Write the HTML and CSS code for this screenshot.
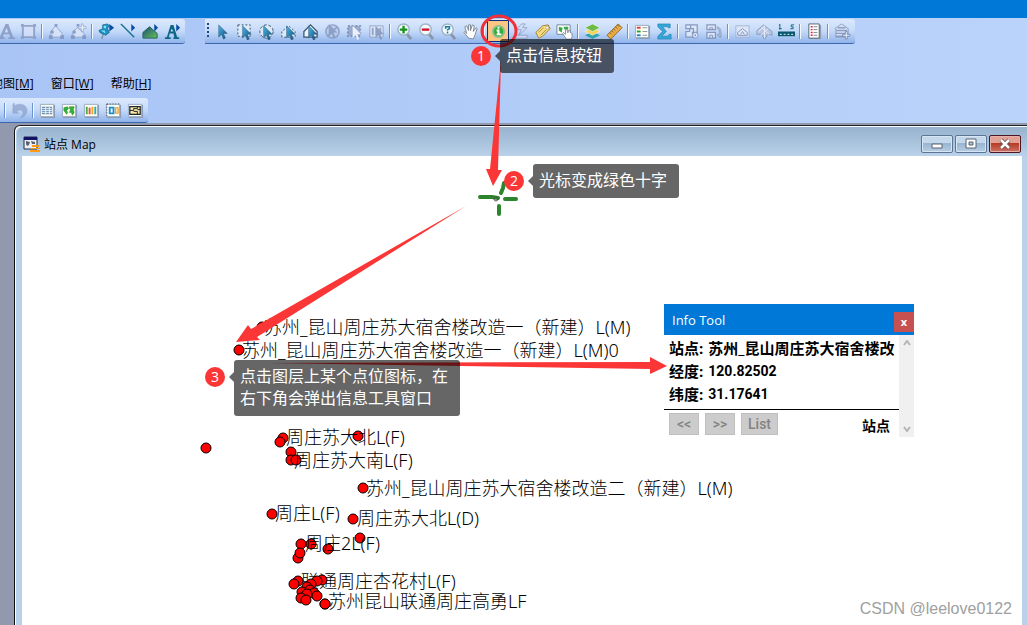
FILE: index.html
```
<!DOCTYPE html>
<html lang="zh-CN">
<head>
  <meta charset="UTF-8">
  <meta name="viewport" content="width=device-width, initial-scale=1.0">
  <title>站点 Map</title>
  <link rel="stylesheet" href="styles.css">
</head>
<body>
  <!-- 图标定义 -->
  <svg class="icon-defs" aria-hidden="true">
    <defs>
      <linearGradient id="blue" x1="0" y1="0" x2="1" y2="1"><stop offset="0" stop-color="#4db8e8"/><stop offset="1" stop-color="#0c4a78"/></linearGradient>
      <linearGradient id="green" x1="0" y1="0" x2="1" y2="1"><stop offset="0" stop-color="#1c4a78"/><stop offset="1" stop-color="#62c455"/></linearGradient>
      <path id="cursor" d="M5 2v13l3-3 2 5 2-1-2-5h4z"/>
      <g id="nodes" fill="#7c8fbc"><path d="M1 13h4v4H1zM13 13h4v4h-4zM3 8h3v3H3zM7 1h3v3H7z"/></g>
      <g id="lens"><path d="m11 11 5 6" stroke="#8a96a8" stroke-width="3"/><circle cx="8" cy="7" r="6" fill="#f3fbff" stroke="#9db2c4" stroke-width="1.5"/></g>
      <g id="card"><path d="M2 3h15v14H2z" fill="#8a9bb8"/><path d="M1.500 2.500h14v13h-14z" fill="#fffef2" stroke="#9aabc2"/></g>
    </defs>
    <symbol id="i-text" viewBox="0 0 18 18"><path d="M8 1h3l5 14h2v2h-7v-2h2l-1-3H6l-1 3h2v2H0v-2h2zm1 4-2 5h4z" fill="#8593bd"/></symbol>
    <symbol id="i-frame" viewBox="0 0 18 18"><path d="M3 3h12v12H3z" fill="#d5e0f6" stroke="#8797bf" stroke-width="2"/><path d="M1 1h3v3H1zM14 1h3v3h-3zM1 14h3v3H1zM14 14h3v3h-3z" fill="#8797bf"/></symbol>
    <symbol id="i-reshape" viewBox="0 0 18 18"><path d="M3 15V9l5-6 7 8v4z" fill="#dce5f7" stroke="#8a9bc4"/><use href="#nodes"/></symbol>
    <symbol id="i-addnode" viewBox="0 0 18 18"><path d="M3 15V9l5-4 7 6v4z" fill="#dce5f7" stroke="#8a9bc4"/><use href="#nodes"/><path d="M12 1h2v3h3v2h-3v3h-2V6H9V4h3z" fill="#f5f7fd" stroke="#8090b8" stroke-width=".7"/></symbol>
    <symbol id="i-pin" viewBox="0 0 18 18"><path d="m6 10-2 7" stroke="#83919e" stroke-width="1.500"/><path d="m5 2 5-1 2 2-2 3 2 4-4 3-6-3-1-2 4-2z" fill="#1c91c4" stroke="#11658e" stroke-width=".8"/><path d="m6 3 3 0-1 3-2-1zM3 8l4 0 1 3z" fill="#82e3f5"/><path d="m12 1 5 4-5 4z" fill="#074ba5"/></symbol>
    <symbol id="i-line" viewBox="0 0 18 18"><path d="m1 1 14 14" stroke="#187195" stroke-width="1.500"/><path d="m12 1 4 4-4 4z" fill="#074ba5"/></symbol>
    <symbol id="i-region" viewBox="0 0 18 18"><path d="M1 16v-6l7-6 8 7v5z" fill="url(#green)" stroke="#246056"/><path d="m13 1 4 4-4 4z" fill="#074ba5"/></symbol>
    <symbol id="i-label" viewBox="0 0 18 18"><path d="M7 2h3l4 13h2v2h-6v-2h1l-1-4H6l-1 4h2v2H1v-2h2zm1 4-1 3h3z" fill="#0c6684"/><path d="m13 1 4 4-4 4z" fill="#074ba5"/></symbol>
    <symbol id="i-select" viewBox="0 0 18 18"><use href="#cursor" fill="url(#blue)" stroke="#244e70" stroke-width=".5"/></symbol>
    <symbol id="i-marquee" viewBox="0 0 18 18"><path d="M2 2h13v12H2z" fill="#dceaf8" stroke="#35516c" stroke-dasharray="2 2"/><use href="#cursor" x="2" y="1" fill="url(#blue)" stroke="#244e70" stroke-width=".5"/></symbol>
    <symbol id="i-radius" viewBox="0 0 18 18"><circle cx="9" cy="9" r="7" fill="#dceaf8" stroke="#35516c" stroke-dasharray="3 2"/><use href="#cursor" x="1" y="1" fill="url(#blue)" stroke="#244e70" stroke-width=".5"/></symbol>
    <symbol id="i-polysel" viewBox="0 0 18 18"><path d="M2 15V9l7-6 7 6v6z" fill="#dceaf8" stroke="#35516c" stroke-dasharray="2 2"/><use href="#cursor" x="2" y="1" fill="url(#blue)" stroke="#244e70" stroke-width=".5"/></symbol>
    <symbol id="i-boundary" viewBox="0 0 18 18"><path d="M2 15V9l7-7 7 7v6z" fill="#eaf2fb" stroke="#35516c" stroke-width="1.300"/><use href="#cursor" x="2" y="1" fill="url(#blue)" stroke="#244e70" stroke-width=".5"/></symbol>
    <symbol id="i-unselect" viewBox="0 0 18 18"><circle cx="9" cy="9" r="7" fill="#b8c8e8" stroke="#7f91b9" stroke-width="1.500"/><use href="#cursor" y="-1" fill="#8193ba"/><path d="m14 4-10 10" stroke="#7f91b9" stroke-width="1.500"/></symbol>
    <symbol id="i-invert" viewBox="0 0 18 18"><path d="M2 3h13v11H2z" fill="#8f9fc4" stroke="#7082ac" stroke-width="2" stroke-dasharray="2 2"/><use href="#cursor" x="2" y="1" fill="#f4f7fd"/></symbol>
    <symbol id="i-graphsel" viewBox="0 0 18 18"><path d="M2 3h14v12H2z" fill="#e3eaf8" stroke="#8998bd"/><path d="M5 5v8M9 5v8M13 5v8" stroke="#8998bd" stroke-width="2"/><use href="#cursor" x="3" y="1" fill="#8193ba"/></symbol>
    <symbol id="i-zoomin" viewBox="0 0 18 18"><use href="#lens"/><path d="M8 3v8M4 7h8" stroke="#16941d" stroke-width="2.500"/></symbol>
    <symbol id="i-zoomout" viewBox="0 0 18 18"><use href="#lens"/><path d="M4 7h8" stroke="#cf1726" stroke-width="2.500"/></symbol>
    <symbol id="i-view" viewBox="0 0 18 18"><use href="#lens"/><path d="M6 6V4h4v2L8 7v1m0 1v2" fill="none" stroke="#187ba5" stroke-width="1.600"/></symbol>
    <symbol id="i-hand" viewBox="0 0 18 18"><path d="m7 16-5-6 1-1 2 2-2-7 2-1 2 5V2h2v6l2-6 2 1-1 6 3-4 1 1-2 6-2 5z" fill="#fff" stroke="#7c8795"/></symbol>
    <symbol id="i-info" viewBox="0 0 18 18"><circle cx="9" cy="9" r="6" fill="#35ac3b" stroke="#8fc088" stroke-width="2"/><path d="M9 4v2M7 8h2v4M7 12h5" fill="none" stroke="#fff" stroke-width="2"/></symbol>
    <symbol id="i-hotlink" viewBox="0 0 18 18"><path d="m10 1-5 6h5l-3 6 9-8h-5l3-4zM2 13h14v3H2z" fill="#d6e0f4" stroke="#8999bf"/></symbol>
    <symbol id="i-tag" viewBox="0 0 18 18"><path d="m2 10 7-7 6-1 2 4-8 8-4 2z" fill="#f6dc83" stroke="#9c7d34"/><path d="m5 10 5-5M7 13l6-6" stroke="#a98a3c"/><circle cx="14" cy="5" r="1.500" fill="#fff" stroke="#9c7d34" stroke-width=".5"/></symbol>
    <symbol id="i-drag" viewBox="0 0 18 18"><path d="M1 2h14v10H1z" fill="#fff" stroke="#708498"/><path d="m3 4 4 1-1 5-3-2zm5 0h5v3H9z" fill="#3aa943"/><path d="m11 17-4-6 1-1 2 2V7h2v3h1v-2h2v2l2 1v4l-1 2z" fill="#fff" stroke="#6d7783" stroke-width=".8"/></symbol>
    <symbol id="i-layers" viewBox="0 0 18 18"><path d="m1 13 8-4 8 4-8 4z" fill="#31a4ad"/><path d="m1 9 8-4 8 4-8 4z" fill="#f4d45c" stroke="#fff" stroke-width=".5"/><path d="m1 5 8-4 8 4-8 4z" fill="#6ebb45" stroke="#fff" stroke-width=".5"/></symbol>
    <symbol id="i-ruler" viewBox="0 0 18 18"><path d="m1 13 12-12 4 4L5 17z" fill="#e9ae48" stroke="#91601f"/><path d="m4 10 2 2m0-4 2 2m0-4 2 2m0-4 2 2m0-4 2 2" stroke="#6e4817" stroke-width=".8"/></symbol>
    <symbol id="i-legend" viewBox="0 0 18 18"><use href="#card"/><path d="M3 4h4v2H3z" fill="#df333e"/><path d="M3 8h4v2H3z" fill="#289b38"/><path d="M3 12h4v2H3z" fill="#1982c1"/><path d="M9 5h5M9 9h5M9 13h5" stroke="#8994a2"/></symbol>
    <symbol id="i-sigma" viewBox="0 0 18 18"><path d="M2 1h13v4h-2l-1-1H7l4 5-5 5h6l2-2h2v5H2v-3l5-5-5-5z" fill="#35a6d8" stroke="#1978a8" stroke-width=".6"/></symbol>
    <symbol id="i-district" viewBox="0 0 18 18"><path d="M2 2h12v8H9v5H2V9h4V6H2zM7 2v4h3v4" fill="#e3eaf8" stroke="#7788b0" stroke-width="1.300"/><circle cx="12" cy="13" r="3" fill="#e9effa" stroke="#7788b0"/><circle cx="12" cy="13" r="1" fill="#7788b0"/></symbol>
    <symbol id="i-clip" viewBox="0 0 18 18"><path d="M1 2h9v5H1zM1 10h9v6H1z" fill="#e3eaf8" stroke="#7788b0" stroke-width="1.300"/><path d="M4 7V5h3v2M4 16v-3h3v3" fill="none" stroke="#7788b0"/><path d="M12 4c4 1 4 5 4 11h-2l-2-3h2c0-3 0-5-2-6z" fill="#a7b5d4" stroke="#7788b0" stroke-width=".7"/></symbol>
    <symbol id="i-cliparea" viewBox="0 0 18 18"><path d="M2 3h14v12H2z" fill="#e2e9f7" stroke="#9aa9ca"/><path d="M4 13v-3l5-4 5 4v3z" fill="#eaf0fc" stroke="#7082ac"/><path d="m7 12 2-3 2 3" fill="none" stroke="#7082ac"/></symbol>
    <symbol id="i-target" viewBox="0 0 18 18"><path d="M1 12V8l7-6 9 7v4l-4-1-4 5-3-5z" fill="#b5c1dc" stroke="#7d8eb4"/><path d="m2 10 7-7v13M6 5l8 7M13 6l-8 7" fill="none" stroke="#edf2fb"/></symbol>
    <symbol id="i-scale" viewBox="0 0 18 18"><path d="M2 1v6M1 2h1M1 6h3M17 2h-3v2h2v2h-3" fill="none" stroke="#12677d"/><path d="M0 9h18v5H0z" fill="#08576f"/><path d="M2 12h2m2 0h2m2 0h2m2 0h2" stroke="#fff"/></symbol>
    <symbol id="i-list" viewBox="0 0 18 18"><path d="M4 2h12v15H4z" fill="#8f9eb2"/><path d="M3 1h11v15H3z" fill="#fff" stroke="#56636f"/><path d="M5 4h2M5 7h2M5 10h2M5 13h2" stroke="#d42a36" stroke-width="1.500"/><path d="M8 4h4M8 7h4M8 10h4M8 13h4" stroke="#73818e"/></symbol>
    <symbol id="i-bank" viewBox="0 0 18 18"><path d="m1 6 7-5 7 5v9H2V7z" fill="#dbe3f4" stroke="#8091b6"/><path d="M4 5h8M2 8h12M2 11h10M2 14h12" stroke="#8091b6" stroke-width="1.500"/><path d="M12 9h2v3h3v2h-3v3h-2v-3H9v-2h3z" fill="#f0f4fc" stroke="#7082ac"/></symbol>
    <symbol id="i-undo" viewBox="0 0 18 18"><path d="m3 1 1 3c7-4 13 0 13 5 0 4-3 7-7 8 3-4 4-6 1-8-2-1-3 0-5 1l2 2H2V3z" fill="#92a5cf" stroke="#8298c6" stroke-width=".5"/></symbol>
    <symbol id="i-browser" viewBox="0 0 18 18"><use href="#card"/><path d="M3 5h11v8H3z" fill="#6d92b8"/><path d="M3 7h11M3 9h11M3 11h11M7 5v8M11 5v8" stroke="#fff" stroke-width=".8"/></symbol>
    <symbol id="i-mapper" viewBox="0 0 18 18"><use href="#card"/><path d="m3 6 4-1 1 2-2 2 1 2-1 2-3-4zm6-1h5l-1 3 1 3-2 3-1-3H9l1-3-1-1z" fill="#30b238" stroke="#277d2c" stroke-width=".5"/></symbol>
    <symbol id="i-grapher" viewBox="0 0 18 18"><use href="#card"/><path d="M3 5h2v8H3z" fill="#54a94a"/><path d="M6 6h2v7H6z" fill="#e55237"/><path d="M9 5h2v8H9z" fill="#f1a829"/><path d="M12 5h2v8h-2z" fill="#22adc0"/></symbol>
    <symbol id="i-layout" viewBox="0 0 18 18"><use href="#card"/><path d="M2 2h14M2 2v14" stroke="#27384f" stroke-dasharray="1 2"/><path d="M5 6h4v6H5z" fill="#fff" stroke="#1790d3" stroke-width="2"/><path d="M11 6h3v6h-3z" fill="#ffd79b" stroke="#e99429"/></symbol>
    <symbol id="i-redistrict" viewBox="0 0 18 18"><use href="#card"/><path d="M3 5h11v8H3z" fill="#fbe3a0" stroke="#172733" stroke-width="1.300"/><path d="M3 9h4V7h4V5M7 10h4v3M11 8h3" fill="none" stroke="#172733"/></symbol>
    <symbol id="i-window" viewBox="0 0 18 18"><path d="M1 2h13v12H1z" fill="#eef1f4" stroke="#222b46"/><path d="M1 2h13v3H1z" fill="#12126a"/><path d="m3 6 4 1-1 3-2 1-1-2zm5 0 4 1v2L9 9z" fill="#586170"/><path d="M9 10h7v2H9zM8 13h9v1H8zM7 15h10v2H7z" fill="#ff9a12"/></symbol>
  </svg>

  <div class="app-title"></div>

  <!-- 工具栏和菜单 -->
  <header class="ribbon">
    <div class="toolbar-row">
      <div class="toolbar toolbar-draw">
        <button disabled aria-label="文本样式"><svg><use href="#i-text"/></svg></button>
        <button disabled aria-label="框架"><svg><use href="#i-frame"/></svg></button>
        <i class="sep"></i>
        <button disabled aria-label="整形"><svg><use href="#i-reshape"/></svg></button>
        <button disabled aria-label="增加节点"><svg><use href="#i-addnode"/></svg></button>
        <i class="sep"></i>
        <button aria-label="符号样式"><svg><use href="#i-pin"/></svg></button>
        <button aria-label="线样式"><svg><use href="#i-line"/></svg></button>
        <button aria-label="区域样式"><svg><use href="#i-region"/></svg></button>
        <button aria-label="字体样式"><svg><use href="#i-label"/></svg></button>
      </div>
      <div class="toolbar toolbar-main">
        <i class="grip"></i>
        <button aria-label="选择"><svg><use href="#i-select"/></svg></button>
        <button aria-label="框选"><svg><use href="#i-marquee"/></svg></button>
        <button aria-label="半径选择"><svg><use href="#i-radius"/></svg></button>
        <button aria-label="多边形选择"><svg><use href="#i-polysel"/></svg></button>
        <button aria-label="边界选择"><svg><use href="#i-boundary"/></svg></button>
        <button disabled aria-label="撤消选择"><svg><use href="#i-unselect"/></svg></button>
        <button disabled aria-label="反选"><svg><use href="#i-invert"/></svg></button>
        <button disabled aria-label="统计图选择"><svg><use href="#i-graphsel"/></svg></button>
        <i class="sep"></i>
        <button aria-label="放大"><svg><use href="#i-zoomin"/></svg></button>
        <button aria-label="缩小"><svg><use href="#i-zoomout"/></svg></button>
        <button aria-label="改变视图"><svg><use href="#i-view"/></svg></button>
        <button aria-label="漫游"><svg><use href="#i-hand"/></svg></button>
        <i class="sep"></i>
        <button class="active" aria-label="信息"><svg><use href="#i-info"/></svg></button>
        <button disabled aria-label="热链接"><svg><use href="#i-hotlink"/></svg></button>
        <button aria-label="标注"><svg><use href="#i-tag"/></svg></button>
        <button aria-label="拖动地图"><svg><use href="#i-drag"/></svg></button>
        <i class="sep"></i>
        <button aria-label="图层控制"><svg><use href="#i-layers"/></svg></button>
        <button aria-label="标尺"><svg><use href="#i-ruler"/></svg></button>
        <i class="sep"></i>
        <button aria-label="图例"><svg><use href="#i-legend"/></svg></button>
        <button aria-label="统计"><svg><use href="#i-sigma"/></svg></button>
        <i class="sep"></i>
        <button disabled aria-label="设置目标区"><svg><use href="#i-district"/></svg></button>
        <button disabled aria-label="分配对象"><svg><use href="#i-clip"/></svg></button>
        <i class="sep"></i>
        <button disabled aria-label="剪裁区域"><svg><use href="#i-cliparea"/></svg></button>
        <button disabled aria-label="设置剪裁"><svg><use href="#i-target"/></svg></button>
        <button aria-label="比例尺"><svg><use href="#i-scale"/></svg></button>
        <i class="sep"></i>
        <button aria-label="程序列表"><svg><use href="#i-list"/></svg></button>
        <i class="sep"></i>
        <button disabled aria-label="目录"><svg><use href="#i-bank"/></svg></button>
      </div>
    </div>
    <nav class="menu">
      <a href="#">地图<u>[M]</u></a>
      <a href="#">窗口<u>[W]</u></a>
      <a href="#">帮助<u>[H]</u></a>
    </nav>
    <div class="toolbar toolbar-window">
      <i class="sep"></i>
      <button disabled aria-label="撤消"><svg><use href="#i-undo"/></svg></button>
      <i class="sep"></i>
      <button aria-label="浏览窗口"><svg><use href="#i-browser"/></svg></button>
      <button aria-label="地图窗口"><svg><use href="#i-mapper"/></svg></button>
      <button aria-label="统计图窗口"><svg><use href="#i-grapher"/></svg></button>
      <button aria-label="布局窗口"><svg><use href="#i-layout"/></svg></button>
      <button aria-label="分区窗口"><svg><use href="#i-redistrict"/></svg></button>
    </div>
  </header>

  <!-- 地图窗口 -->
  <main class="workspace">
    <section class="map-window">
      <div class="map-title">
        <svg class="map-icon"><use href="#i-window"/></svg>
        <h1>站点 Map</h1>
        <div class="controls">
          <button aria-label="最小化"><svg viewBox="0 0 14 12"><path d="M2 6h10v4H2z" fill="#fff" stroke="#5a6270"/></svg></button>
          <button aria-label="还原"><svg viewBox="0 0 14 12"><path d="M2 1h10v9H2z" fill="#fff" stroke="#5a6270"/><path d="M5 4h4v3H5z" fill="#a9c4de" stroke="#5a6270"/></svg></button>
          <button class="close" aria-label="关闭"><svg viewBox="0 0 14 12"><path d="m3 2 8 8m0-8-8 8" stroke="#5a4550" stroke-width="4"/><path d="m3 2 8 8m0-8-8 8" stroke="#fff" stroke-width="2.500"/></svg></button>
        </div>
      </div>
      <div class="map-view">
        <svg class="map">
          <g class="points">
            <circle cx="240" cy="171" r="5"/><circle cx="217" cy="194" r="5"/>
            <circle cx="184" cy="292" r="5"/><circle cx="261" cy="282" r="5"/>
            <circle cx="258" cy="286" r="5"/><circle cx="269" cy="296" r="5"/>
            <circle cx="269" cy="304" r="5"/><circle cx="341" cy="332" r="5"/>
            <circle cx="274" cy="304" r="5"/><circle cx="250" cy="358" r="5"/>
            <circle cx="331" cy="363" r="5"/><circle cx="279" cy="388" r="5"/>
            <circle cx="289" cy="388" r="5"/><circle cx="276" cy="402" r="5"/>
            <circle cx="278" cy="397" r="5"/><circle cx="276" cy="425" r="5"/>
            <circle cx="272" cy="428" r="5"/><circle cx="303" cy="448" r="5"/>
            <circle cx="336" cy="280" r="5"/><circle cx="338" cy="382" r="5"/>
            <circle cx="306" cy="393" r="5"/>
          </g>
          <g class="labels">
            <text x="242" y="178">苏州_昆山周庄苏大宿舍楼改造一（新建）L(M)</text>
            <text x="220" y="201">苏州_昆山周庄苏大宿舍楼改造一（新建）L(M)0</text>
            <text x="264" y="288">周庄苏大北L(F)</text>
            <text x="272" y="311">周庄苏大南L(F)</text>
            <text x="344" y="339">苏州_昆山周庄苏大宿舍楼改造二（新建）L(M)</text>
            <text x="253" y="364">周庄L(F)</text>
            <text x="335" y="369">周庄苏大北L(D)</text>
            <text x="283" y="394">周庄2L(F)</text>
            <text x="279" y="432">联通周庄杏花村L(F)</text>
            <text x="306" y="452">苏州昆山联通周庄高勇LF</text>
          </g>
          <g class="points">
            <circle cx="300" cy="424" r="5"/><circle cx="295" cy="425" r="5"/>
            <circle cx="289" cy="428" r="5"/><circle cx="285" cy="431" r="5"/>
            <circle cx="288" cy="434" r="5"/><circle cx="280" cy="436" r="5"/>
            <circle cx="292" cy="437" r="5"/><circle cx="285" cy="438" r="5"/>
            <circle cx="279" cy="442" r="5"/><circle cx="295" cy="440" r="5"/>
            <circle cx="284" cy="444" r="5"/><circle cx="303" cy="448" r="5"/>
          </g>
        </svg>

        <!-- 信息工具 -->
        <section class="info-tool">
          <div class="info-head">
            <h2>Info Tool</h2>
            <button aria-label="关闭信息工具">x</button>
          </div>
          <div class="info-body">
            <div class="info-main">
              <table>
                <tr><th scope="row">站点:</th><td>苏州_昆山周庄苏大宿舍楼改</td></tr>
                <tr><th scope="row">经度:</th><td class="num">120.82502</td></tr>
                <tr><th scope="row">纬度:</th><td class="num">31.17641</td></tr>
              </table>
              <div class="info-foot">
                <button disabled>&lt;&lt;</button>
                <button disabled>&gt;&gt;</button>
                <button disabled>List</button>
                <span>站点</span>
              </div>
            </div>
            <div class="scroll">
              <svg viewBox="0 0 8 6"><path d="m1 5 3-4 3 4"/></svg>
              <svg viewBox="0 0 8 6"><path d="m1 1 3 4 3-4"/></svg>
            </div>
          </div>
        </section>
        <div class="watermark">CSDN @leelove0122</div>
      </div>
    </section>
  </main>

  <!-- 操作步骤标注 -->
  <div class="notes">
    <svg class="arrows">
      <ellipse cx="499" cy="31" rx="17" ry="15"/>
      <path d="M501 60 498 170h4l-9 16-7-17h4z"/>
      <path d="M466 206 257 337l3 3-24 2 12-17 3 4z"/>
      <path d="M267 363 650 362v-5l17 9-17 8v-5z"/>
      <g class="cross">
        <path d="m480 197 12 0 6 1M505 199h11M501 193l2-5 1-5M499 206v8"/>
        <circle cx="496" cy="199" r="2"/>
      </g>
    </svg>
    <div class="note note-1"><b>1</b><p>点击信息按钮</p></div>
    <div class="note note-2"><b>2</b><p>光标变成绿色十字</p></div>
    <div class="note note-3"><b>3</b><p>点击图层上某个点位图标，在<br>右下角会弹出信息工具窗口</p></div>
  </div>
</body>
</html>
```
FILE: styles.css
```
/* 基础样式 */
* {
  box-sizing: border-box;
}
html, body {
  height: 100%;
}
body {
  margin: 0;
  display: flex;
  flex-direction: column;
  overflow: hidden;
  position: relative;
  font-family: "Open Sans", "Noto Sans CJK SC", sans-serif;
  font-size: 12px;
  color: #000;
}
button {
  font-family: inherit;
  padding: 0;
  border: none;
  background: none;
}
h1, h2, p {
  margin: 0;
  font-weight: normal;
}
.icon-defs {
  position: absolute;
  width: 0;
  height: 0;
}
.app-title {
  height: 18px;
  background: #0078d7;
}
/* 工具栏 */
.ribbon {
  height: 105px;
  display: flex;
  flex-direction: column;
  align-items: flex-start;
  background: linear-gradient(90deg, #a9c5f6, #bad3fa);
}
.toolbar-row {
  display: flex;
  gap: 20px;
  margin-top: 1px;
}
.toolbar {
  display: flex;
  align-items: center;
  height: 25px;
  padding-right: 2px;
  border-radius: 0 3px 3px 0;
  border-bottom: 1px solid #3f67ad;
  background: linear-gradient(#dce9fd, #c5daf9 50%, #8fb3ea);
}
.toolbar-draw {
  margin-left: -5px;
}
.toolbar-window {
  padding-left: 2px;
}
.toolbar button {
  display: flex;
  align-items: center;
  justify-content: center;
  width: 22px;
  height: 22px;
}
.toolbar svg {
  width: 17px;
  height: 17px;
}
.toolbar button:disabled svg {
  opacity: 0.8;
}
.toolbar button.active {
  background: #fdc584;
  border: 1px solid #0a2a80;
}
.sep {
  width: 2px;
  height: 15px;
  margin: 0 2px;
  background: #6b93d0;
  border-right: 1px solid #f3f8ff;
}
.grip {
  width: 2px;
  height: 16px;
  margin: 0 2px;
  background: repeating-linear-gradient(#24457f 0 2px, transparent 2px 4px);
}
/* 菜单 */
.menu {
  display: flex;
  gap: 17px;
  margin: 30px 0 4px -9px;
  line-height: 20px;
}
.menu a {
  color: #000;
  text-decoration: none;
}
/* 地图窗口 */
.workspace {
  flex: 1;
  min-height: 0;
  display: flex;
  padding: 2px 0 0 14px;
  background: #9299ae;
}
.map-window {
  flex: 1;
  display: flex;
  flex-direction: column;
  padding: 0 5px 0 7px;
  border-top: 1px solid #222;
  border-left: 1px solid #111;
  border-radius: 6px 0 0 0;
  background: #b9d1ea;
  box-shadow: inset 1px 1px #fff;
}
.map-title {
  display: flex;
  align-items: center;
  height: 30px;
  margin: 0 -5px;
  padding: 4px 6px 0 5px;
  background: linear-gradient(#98b3cf, #b9d1e9);
  border-top: 1px solid #fff;
  border-radius: 6px 0 0 0;
}
.map-icon {
  width: 18px;
  height: 18px;
  margin: 0 3px 0 1px;
}
.map-title h1 {
  font-size: 12px;
}
.controls {
  display: flex;
  gap: 2px;
  margin-left: auto;
}
.controls button {
  display: flex;
  align-items: center;
  justify-content: center;
  width: 32px;
  height: 18px;
  border: 1px solid #5d7594;
  border-radius: 2px;
  background: linear-gradient(#c4d8eb 45%, #98b4d0 45%, #b6cee4);
  box-shadow: inset 0 0 0 1px #d8e6f3;
}
.controls svg {
  width: 14px;
  height: 12px;
}
.controls .close {
  border-color: #4c1722;
  background: linear-gradient(#e2a196 45%, #b63a25 45%, #cc7265);
  box-shadow: inset 0 0 0 1px #e6b1a9;
}
.map-view {
  flex: 1;
  min-height: 0;
  position: relative;
  background: #fff;
}
.map {
  display: block;
  width: 100%;
  height: 100%;
}
.points circle {
  fill: #f00;
  stroke: #000;
  stroke-width: 1;
}
.labels {
  font-family: "Noto Sans", "Noto Sans CJK SC", sans-serif;
  font-size: 18px;
  font-weight: 300;
}
/* 信息工具 */
.info-tool {
  position: absolute;
  left: 642px;
  top: 148px;
  width: 250px;
  background: #fff;
}
.info-head {
  display: flex;
  align-items: center;
  height: 31px;
  padding-left: 8px;
  background: #0078d7;
  color: #fff;
}
.info-head h2 {
  flex: 1;
  font-size: 13px;
}
.info-head button {
  width: 20px;
  height: 20px;
  margin-top: 4px;
  background: #c75050;
  color: #fff;
  font-size: 11px;
  font-weight: bold;
}
.info-body {
  display: flex;
}
.info-main {
  flex: 1;
  min-width: 0;
}
.info-main table {
  border-collapse: collapse;
  font-size: 15px;
  font-weight: bold;
  line-height: 23px;
  margin: 2px 0 3px 5px;
}
.info-main th, .info-main td {
  height: 23px;
  padding: 0;
  text-align: left;
  white-space: nowrap;
}
.info-main th {
  padding-right: 5px;
}
.info-main .num {
  font-family: Roboto, sans-serif;
  font-size: 14px;
}
.info-foot {
  display: flex;
  align-items: flex-start;
  gap: 6px;
  height: 28px;
  padding: 3px 9px 0 5px;
  border-top: 1px solid #000;
}
.info-foot button {
  min-width: 30px;
  height: 22px;
  padding: 0 6px;
  border: 1px solid #bfbfbf;
  background: #ccc;
  color: #838383;
  font-family: Roboto, sans-serif;
  font-size: 14px;
  font-weight: 500;
}
.info-foot span {
  margin-left: auto;
  font-size: 14px;
  font-weight: bold;
  line-height: 26px;
}
.scroll {
  display: flex;
  flex-direction: column;
  justify-content: space-between;
  align-items: center;
  width: 15px;
  padding: 5px 0;
  background: #f0f0f0;
}
.scroll svg {
  width: 8px;
  height: 6px;
  fill: none;
  stroke: #b5b5b5;
  stroke-width: 2;
}
.watermark {
  position: absolute;
  right: 10px;
  bottom: 4px;
  font-family: "Liberation Sans", sans-serif;
  font-size: 16px;
  line-height: 24px;
  color: #a0a0a0;
}
/* 步骤标注 */
.notes {
  position: absolute;
  inset: 0;
  pointer-events: none;
}
.arrows {
  width: 100%;
  height: 100%;
  fill: #fb3636;
}
.arrows ellipse {
  fill: none;
  stroke: #f03038;
  stroke-width: 3;
}
.cross {
  fill: none;
  stroke: #2c842c;
  stroke-width: 4;
  stroke-linecap: round;
}
.cross circle {
  stroke: #555;
  stroke-width: 1;
}
.note {
  position: absolute;
  display: flex;
  align-items: flex-start;
  gap: 9px;
  color: #fff;
}
.note b {
  width: 20px;
  height: 20px;
  margin-top: 7px;
  border-radius: 50%;
  background: #fb3636;
  font-size: 14px;
  font-weight: normal;
  line-height: 20px;
  text-align: center;
}
.note p {
  position: relative;
  padding: 5px 12px 7px 6px;
  border-radius: 3px;
  background: rgba(0, 0, 0, 0.6);
  font-size: 16px;
  line-height: 22px;
  white-space: nowrap;
}
.note p::before {
  content: "";
  position: absolute;
  left: -5px;
  top: 12px;
  border: solid transparent;
  border-width: 5px 5px 5px 0;
  border-right-color: rgba(0, 0, 0, 0.6);
}
.note-1 {
  left: 471px;
  top: 39px;
}
.note-2 {
  left: 504px;
  top: 164px;
}
.note-3 {
  left: 205px;
  top: 360px;
}
```
